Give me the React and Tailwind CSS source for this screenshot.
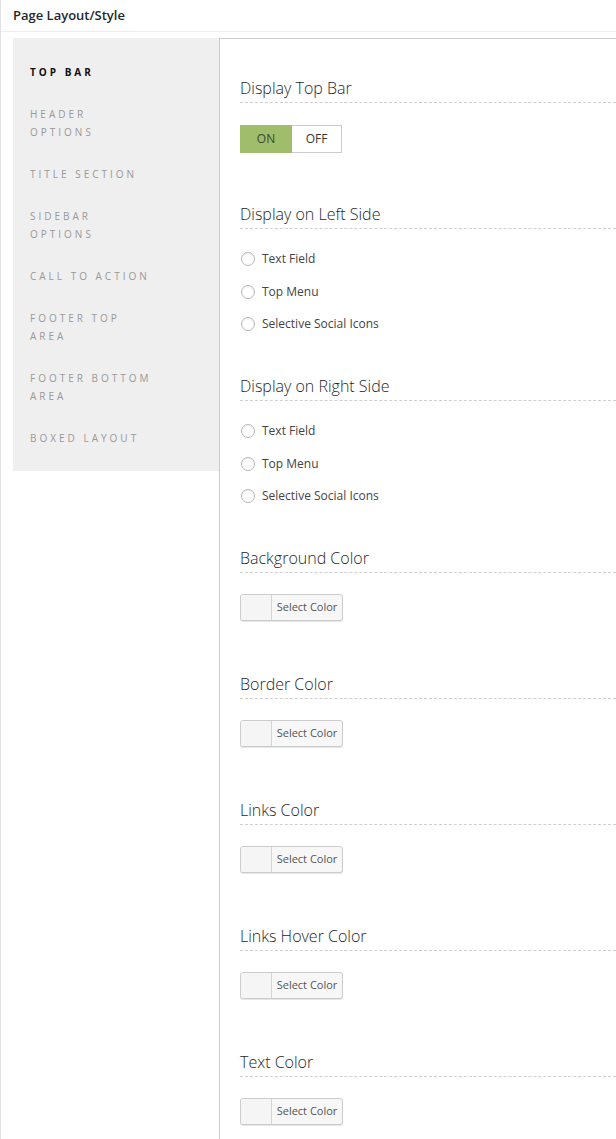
import React from 'react';

const menu = [
    { lines: ['Top Bar'], active: true },
    { lines: ['Header', 'Options'] },
    { lines: ['Title Section'] },
    { lines: ['Sidebar', 'Options'] },
    { lines: ['Call to Action'] },
    { lines: ['Footer Top', 'Area'] },
    { lines: ['Footer Bottom', 'Area'] },
    { lines: ['Boxed Layout'] },
];

const radioOptions = ['Text Field', 'Top Menu', 'Selective Social Icons'];

function Heading({ children }) {
    return (
        <h3 className="text-[16px] leading-[24px] text-[#23282d] pb-[2px] border-b border-dashed border-[#cfcfcf] font-light">
            {children}
        </h3>
    );
}

function Toggle() {
    return (
        <div className="mt-[22px] mb-[49px] flex h-[28px] w-[102px] text-[12px]">
            <div className="w-[52px] flex items-center justify-center bg-[#9fbd6b] text-[#3d4a2c]">ON</div>
            <div className="flex-1 flex items-center justify-center bg-white border border-l-0 border-[#cccccc] text-[#333]">OFF</div>
        </div>
    );
}

function Radios() {
    return (
        <div className="mt-[22px] mb-[42px] flex flex-col gap-[16.5px]">
            {radioOptions.map((opt) => (
                <label key={opt} className="flex items-center h-[16px] text-[12px] text-[#444]">
                    <span className="w-[14px] h-[14px] rounded-full border border-[#b4b9be] bg-white shadow-[inset_0_1px_2px_rgba(0,0,0,0.07)] ml-[1px] mr-[7px]" />
                    {opt}
                </label>
            ))}
        </div>
    );
}

function ColorPicker() {
    return (
        <div className="mt-[21px] mb-[51px] flex h-[27px] w-[103px] rounded-[3px] border border-[#cccccc] bg-[#f7f7f7] overflow-hidden shadow-[0_1px_0_#e5e5e5]">
            <div className="w-[31px] bg-[#f5f5f5] border-r border-[#d5d5d5]" />
            <div className="flex-1 flex items-center justify-center text-[11px] text-[#555]">Select Color</div>
        </div>
    );
}

export default function App() {
    return (
        <div
            className="w-[616px] h-[1139px] overflow-hidden bg-white border-l border-[#e2e2e2] flex flex-col"
            style={{ fontFamily: '"Open Sans", "Noto Sans", sans-serif' }}
        >
            <div className="h-[32px] shrink-0 border-b border-[#eeeeee] pl-[12px] flex items-center">
                <h2 className="text-[13px] font-semibold text-[#23282d]">Page Layout/Style</h2>
            </div>

            <div className="flex flex-1 pt-[6px] pl-[12px]">
                <ul className="w-[206px] shrink-0 self-start bg-[#efefef] pt-[13px] pb-[12px] pl-[17px]">
                    {menu.map((item) => (
                        <li
                            key={item.lines.join(' ')}
                            className={`py-[12px] text-[10px] leading-[18px] uppercase tracking-[3px] ${item.active ? 'font-bold text-[#111]' : 'text-[#999]'}`}
                        >
                            {item.lines.map((l) => (
                                <span key={l} className="block">{l}</span>
                            ))}
                        </li>
                    ))}
                </ul>

                <div className="flex-1 border-l border-t border-[#cccccc] pl-[20px] pt-[37px] min-w-0">
                    <Heading>Display Top Bar</Heading>
                    <Toggle />

                    <Heading>Display on Left Side</Heading>
                    <Radios />

                    <Heading>Display on Right Side</Heading>
                    <Radios />

                    <Heading>Background Color</Heading>
                    <ColorPicker />

                    <Heading>Border Color</Heading>
                    <ColorPicker />

                    <Heading>Links Color</Heading>
                    <ColorPicker />

                    <Heading>Links Hover Color</Heading>
                    <ColorPicker />

                    <Heading>Text Color</Heading>
                    <ColorPicker />
                </div>
            </div>
        </div>
    );
}
